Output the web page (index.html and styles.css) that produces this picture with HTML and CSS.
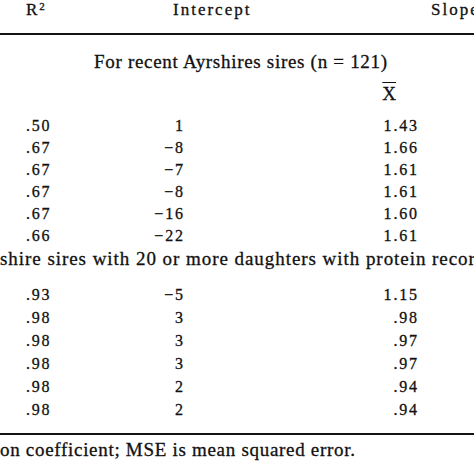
FILE: index.html
```html
<!DOCTYPE html>
<html lang="en">
<head>
<meta charset="utf-8">
<title>Table</title>
<link rel="stylesheet" href="styles.css">
</head>
<body>
<div class="page">
  <div class="head">
    <span class="h-r2">R<sup>2</sup></span>
    <span class="h-int">Intercept</span>
    <span class="h-slope">Slope</span>
  </div>
  <div class="rule rule-top"></div>
  <div class="caption caption-center">For recent Ayrshires sires (n = 121)</div>
  <div class="row xbar-row"><span></span><span></span><span class="xbar">X</span></div>
  <div class="group group-one">
    <div class="row"><span>.50</span><span>1</span><span>1.43</span></div>
    <div class="row"><span>.67</span><span>−8</span><span>1.66</span></div>
    <div class="row"><span>.67</span><span>−7</span><span>1.61</span></div>
    <div class="row"><span>.67</span><span>−8</span><span>1.61</span></div>
    <div class="row"><span>.67</span><span>−16</span><span>1.60</span></div>
    <div class="row"><span>.66</span><span>−22</span><span>1.61</span></div>
  </div>
  <div class="caption caption-left">shire sires with 20 or more daughters with protein records</div>
  <div class="group group-two">
    <div class="row"><span>.93</span><span>−5</span><span>1.15</span></div>
    <div class="row"><span>.98</span><span>3</span><span>.98</span></div>
    <div class="row"><span>.98</span><span>3</span><span>.97</span></div>
    <div class="row"><span>.98</span><span>3</span><span>.97</span></div>
    <div class="row"><span>.98</span><span>2</span><span>.94</span></div>
    <div class="row"><span>.98</span><span>2</span><span>.94</span></div>
  </div>
  <div class="rule rule-bottom"></div>
  <div class="caption footer">on coefficient; MSE is mean squared error.</div>
</div>
</body>
</html>
```
FILE: styles.css
```css
html, body {
  margin: 0;
  padding: 0;
  background: #ffffff;
}
body {
  width: 474px;
  height: 474px;
  overflow: hidden;
  font-family: "Liberation Serif", "Times New Roman", serif;
  color: #111111;
  -webkit-text-stroke: 0.3px #111111;
}
.page {
  display: flex;
  flex-direction: column;
  width: 474px;
}
.head {
  display: grid;
  grid-template-columns: 26px 147px 258px 60px;
  height: 19px;
  line-height: 19px;
  font-size: 17px;
  letter-spacing: 2px;
  white-space: nowrap;
}
.h-r2 { grid-column: 2; }
.h-int { grid-column: 3; }
.h-slope { grid-column: 4; }
.head sup {
  font-size: 11px;
  line-height: 0;
  vertical-align: 5px;
  letter-spacing: 0;
}
.rule {
  height: 2px;
  background: #151515;
  width: 474px;
}
.rule-top { margin-top: 14px; }
.rule-bottom { margin-top: 12px; }
.caption {
  font-size: 19px;
  line-height: 24px;
  letter-spacing: 0.7px;
  white-space: nowrap;
}
.caption-center {
  margin-top: 15px;
  padding-left: 94px;
}
.caption-left {
  margin-top: 0;
  padding-left: 0;
  letter-spacing: 0.95px;
}
.row {
  display: grid;
  grid-template-columns: 74px 83px 234px;
  padding-left: 26px;
  font-size: 16px;
  line-height: 22px;
  letter-spacing: 1.8px;
  white-space: nowrap;
}
.row span { display: block; }
.row span:nth-child(2),
.row span:nth-child(3) {
  text-align: right;
  margin-right: -1.8px;
}
.xbar-row {
  margin-top: 8px;
  font-size: 19px;
  line-height: 24px;
  letter-spacing: 0;
}
.xbar-row span:nth-child(3) {
  margin-right: 0;
  padding-right: 21px;
}
.xbar {
  text-decoration: overline;
  text-decoration-thickness: 1px;
}
.group-one { margin-top: 9px; }
.group-two { margin-top: 12px; }
.group-two .row { line-height: 23px; }
.footer { margin-top: 3px; }
```
